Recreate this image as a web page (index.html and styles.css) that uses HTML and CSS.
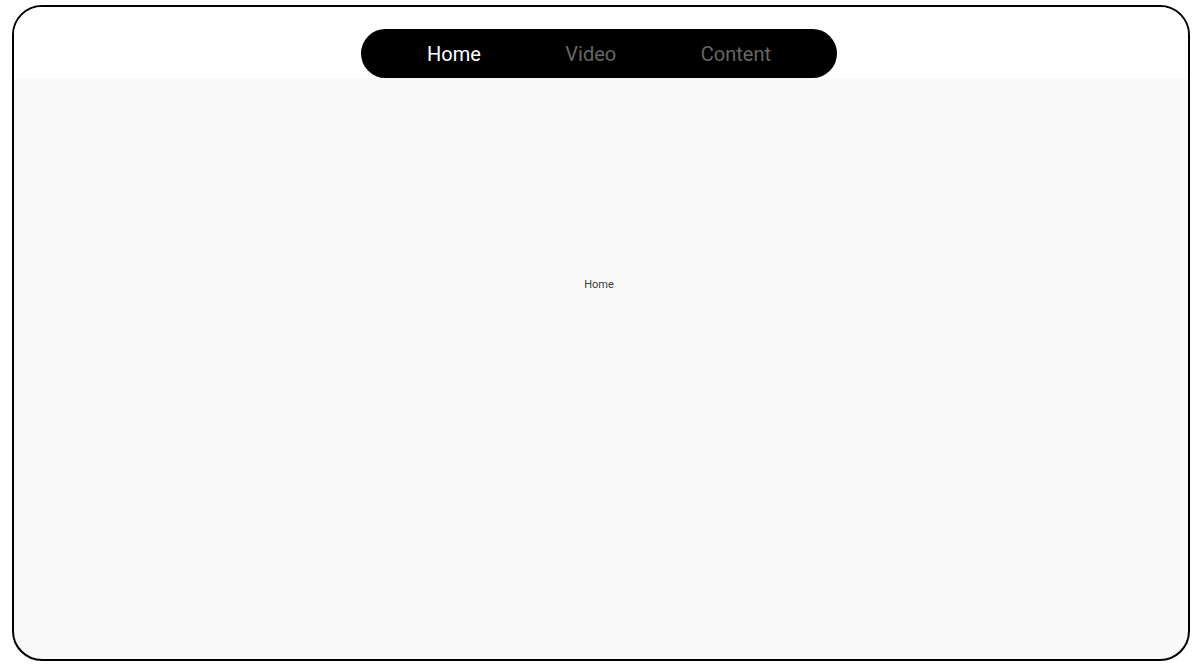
FILE: index.html
```html
<!DOCTYPE html>
<html>
<head>
<meta charset="utf-8">
<link rel="stylesheet" href="styles.css">
</head>
<body>
<div class="frame">
  <header class="header">
    <nav class="tabs">
      <span class="tab active">Home</span>
      <span class="tab">Video</span>
      <span class="tab">Content</span>
    </nav>
  </header>
  <main class="content">
    <p class="label">Home</p>
  </main>
</div>
</body>
</html>
```

FILE: styles.css
```css
html, body {
  margin: 0;
  padding: 0;
  background: #ffffff;
  font-family: Roboto, "Liberation Sans", sans-serif;
}

.frame {
  box-sizing: border-box;
  margin: 5px 0 0 12px;
  width: 1178px;
  height: 656px;
  border: 2px solid #000;
  border-radius: 30px;
  overflow: hidden;
  display: flex;
  flex-direction: column;
  background: #f9f9f9;
}

.header {
  height: 71px;
  flex: none;
  background: #ffffff;
  display: flex;
  justify-content: center;
  align-items: flex-end;
  padding-right: 4px;
}

.tabs {
  box-sizing: border-box;
  height: 49px;
  width: 476px;
  background: #000;
  border-radius: 25px;
  display: flex;
  align-items: center;
  justify-content: space-between;
  padding: 0 66px;
}

.tab {
  font-size: 20px;
  color: #666666;
  line-height: 1;
}

.tab.active {
  color: #ffffff;
}

.content {
  flex: 1;
  display: flex;
  justify-content: center;
  padding-top: 200px;
  padding-right: 4px;
}

.label {
  margin: 0;
  font-size: 11px;
  color: #3a3a3a;
  line-height: 14px;
  height: 14px;
}
```
